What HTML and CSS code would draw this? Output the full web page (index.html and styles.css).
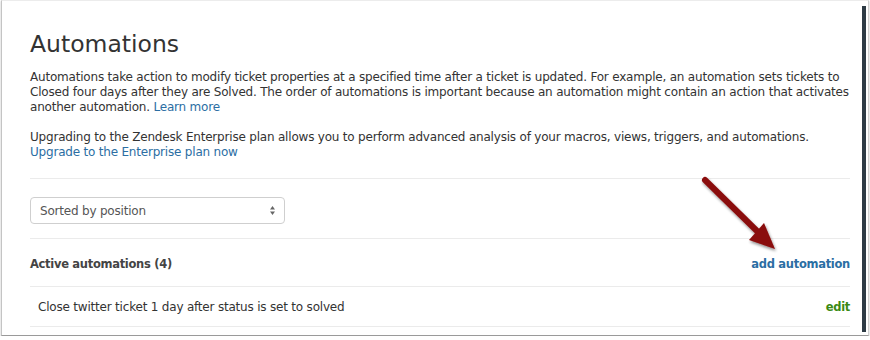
FILE: index.html
```html
<!DOCTYPE html>
<html>
<head>
<meta charset="utf-8">
<link rel="stylesheet" href="styles.css">
</head>
<body>
<div class="window">
  <main class="content">
    <h1 class="title">Automations</h1>
    <p class="desc">Automations take action to modify ticket properties at a specified time after a ticket is updated. For example, an automation sets tickets to Closed four days after they are Solved. The order of automations is important because an automation might contain an action that activates another automation. <a class="link" href="#">Learn more</a></p>
    <p class="desc desc-last">Upgrading to the Zendesk Enterprise plan allows you to perform advanced analysis of your macros, views, triggers, and automations.<br><a class="link" href="#">Upgrade to the Enterprise plan now</a></p>
    <div class="sortbar">
      <div class="select">
        <span>Sorted by position</span>
        <svg class="select-arrows" width="7" height="11" viewBox="0 0 7 11"><path d="M3.5 1 L6 4.5 H1 Z" fill="#666"/><path d="M3.5 10 L6 6.5 H1 Z" fill="#666"/></svg>
      </div>
    </div>
    <div class="section-head">
      <h2 class="section-title">Active automations (4)</h2>
      <a class="add-link" href="#">add automation</a>
    </div>
    <div class="row">
      <span class="row-title">Close twitter ticket 1 day after status is set to solved</span>
      <a class="edit-link" href="#">edit</a>
    </div>
  </main>
  <div class="scrollbar"></div>
  <svg class="arrow" width="90" height="90" viewBox="0 0 90 90">
    <defs>
      <filter id="sh" x="-20%" y="-20%" width="150%" height="150%">
        <feGaussianBlur in="SourceAlpha" stdDeviation="1.5"/>
        <feOffset dx="1" dy="2" result="b"/>
        <feComponentTransfer><feFuncA type="linear" slope="0.45"/></feComponentTransfer>
        <feMerge><feMergeNode/><feMergeNode in="SourceGraphic"/></feMerge>
      </filter>
    </defs>
    <g filter="url(#sh)">
      <line x1="8" y1="8" x2="60" y2="59" stroke="#8a0b0b" stroke-width="6" stroke-linecap="round"/>
      <polygon points="52,68 67,51 78,77" fill="#8a0b0b"/>
    </g>
  </svg>
</div>
</body>
</html>
```

FILE: styles.css
```css
html, body {
  margin: 0;
  padding: 0;
  background: #ffffff;
}

body {
  font-family: "DejaVu Sans", "Open Sans", sans-serif;
  color: #333333;
}

.window {
  position: relative;
  box-sizing: border-box;
  width: 868px;
  height: 336px;
  margin-left: 1px;
  border-top: 1px solid #ececec;
  border-left: 1px solid #c4c4c4;
  border-right: 1px solid #d0d0d0;
  border-bottom: 1px solid #9a9a9a;
  box-shadow: 0 1px 2px rgba(0, 0, 0, 0.25);
  display: flex;
  background: #fff;
}

.content {
  flex: 1;
  padding: 0 12px 0 28px;
  min-width: 0;
}

.scrollbar {
  width: 4px;
  margin: 5px 2px 3px 0;
  background: #2e3b45;
}

.title {
  margin: 28px 0 0;
  font-size: 23.5px;
  line-height: 30px;
  font-weight: normal;
  color: #333;
}

.desc {
  margin: 11px 0 0;
  font-size: 12px;
  line-height: 15px;
  letter-spacing: -0.2px;
  color: #333;
}

.desc + .desc {
  margin-top: 15px;
}

.desc-last {
  margin-bottom: 18px;
}

.link {
  color: #2b6ea3;
  text-decoration: none;
}

.sortbar {
  border-top: 1px solid #ebebeb;
  padding: 18px 0 14px;
}

.select {
  box-sizing: border-box;
  width: 255px;
  height: 27px;
  border: 1px solid #cfcfcf;
  border-radius: 4px;
  display: flex;
  align-items: center;
  justify-content: space-between;
  padding: 0 8px 0 9px;
  font-size: 12px;
  letter-spacing: -0.2px;
  color: #555;
}

.select-arrows {
  display: block;
}

.section-head {
  border-top: 1px solid #ebebeb;
  height: 48px;
  display: flex;
  align-items: center;
  justify-content: space-between;
  padding-top: 2px;
  box-sizing: border-box;
}

.section-title {
  margin: 0;
  font-size: 11.5px;
  letter-spacing: -0.3px;
  font-weight: bold;
  color: #444;
}

.add-link {
  font-size: 11.5px;
  letter-spacing: -0.3px;
  font-weight: bold;
  color: #2b6ea3;
  text-decoration: none;
}

.row {
  border-top: 1px solid #ebebeb;
  border-bottom: 1px solid #ebebeb;
  height: 41px;
  box-sizing: border-box;
  display: flex;
  align-items: center;
  justify-content: space-between;
  padding: 0 0 0 8px;
}

.row-title {
  font-size: 12px;
  letter-spacing: -0.2px;
  color: #333;
}

.edit-link {
  font-size: 11.5px;
  letter-spacing: -0.3px;
  font-weight: bold;
  color: #3a8a14;
  text-decoration: none;
}

.arrow {
  position: absolute;
  left: 695px;
  top: 171px;
}
```
